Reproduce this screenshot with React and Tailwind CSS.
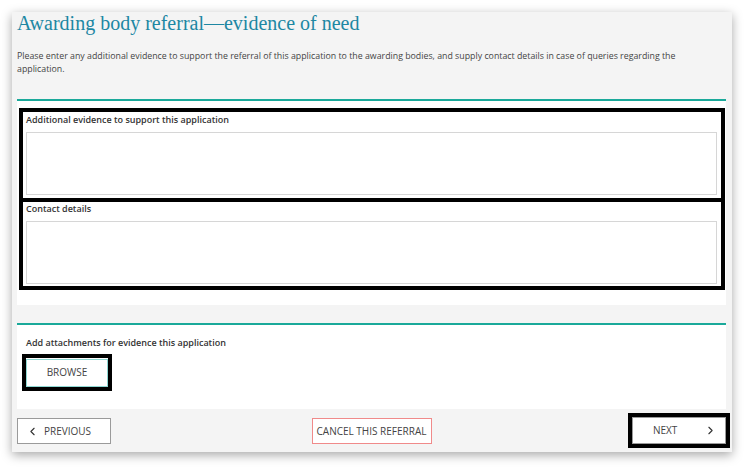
import React from "react";
import { ChevronLeft, ChevronRight } from "lucide-react";

const sans = { fontFamily: '"Open Sans", "Noto Sans", sans-serif' };

function Field({ label, first }) {
  return (
    <div
      className={
        "border-4 border-black bg-white pl-[3px] pr-[4px] " +
        (first ? "pt-px pb-[3px]" : "border-t-0 pb-[2px]")
      }
    >
      <div className="text-[9px] leading-[13px] font-semibold text-[#333]">{label}</div>
      <div className="mt-[6px] h-[63px] border border-[#d6d6d6] bg-white" />
    </div>
  );
}

export default function App() {
  return (
    <div className="min-h-[469px] w-[750px] bg-white pt-[12px] pl-[12px]" style={sans}>
      <div className="w-[720px] h-[440px] bg-[#f4f4f4] shadow-[0_3px_10px_rgba(0,0,0,0.35)] flex flex-col pl-[5px] pr-[2px]">
        <h1
          className="text-[20px] leading-[24px] text-[#1d87a3] -mt-[1px]"
          style={{ fontFamily: '"Liberation Serif", "Times New Roman", serif' }}
        >
          Awarding body referral—evidence of need
        </h1>
        <p className="mt-[15px] pr-[10px] text-[8.8px] leading-[13px] text-[#444]">
          Please enter any additional evidence to support the referral of this application to the awarding bodies, and supply contact details in case of queries regarding the application.
        </p>

        <div className="mt-[23px] mr-[4px] border-t-2 border-[#1aa99a] bg-white pl-[2px] pr-[1px] pt-[7px] pb-[15px]">
          <Field label="Additional evidence to support this application" first />
          <Field label="Contact details" />
        </div>

        <div className="mt-[18px] mr-[4px] h-[86px] border-t-2 border-[#1aa99a] bg-white pl-[5px] pt-[11px]">
          <div className="text-[9px] leading-[13px] font-semibold text-[#333] pl-[4px]">
            Add attachments for evidence this application
          </div>
          <div className="mt-[5px] inline-block border-4 border-black">
            <button className="w-[82px] h-[28px] border border-[#8fd8d3] bg-white text-[10px] text-[#444]">
              BROWSE
            </button>
          </div>
        </div>

        <div className="mt-[4px] grid grid-cols-[1fr_auto_1fr] items-center">
          <div>
            <button className="mt-px w-[94px] h-[26px] border border-[#9a9a9a] bg-white flex items-center pl-[8px] text-[10px] text-[#444]">
              <ChevronLeft size={13} strokeWidth={2} className="text-[#333]" />
              <span className="ml-[5px]">PREVIOUS</span>
            </button>
          </div>
          <button className="mt-px mr-[4px] w-[120px] h-[26px] border border-[#f08a8a] bg-white text-[10px] text-[#444]">
            CANCEL THIS REFERRAL
          </button>
          <div className="flex justify-end">
            <div className="border-4 border-black">
              <button className="w-[94px] h-[27px] border border-[#9a9a9a] bg-white flex items-center pl-[20px] pr-[8px] justify-between text-[10px] text-[#444]">
                <span>NEXT</span>
                <ChevronRight size={13} strokeWidth={2} className="text-[#333]" />
              </button>
            </div>
          </div>
        </div>
      </div>
    </div>
  );
}
